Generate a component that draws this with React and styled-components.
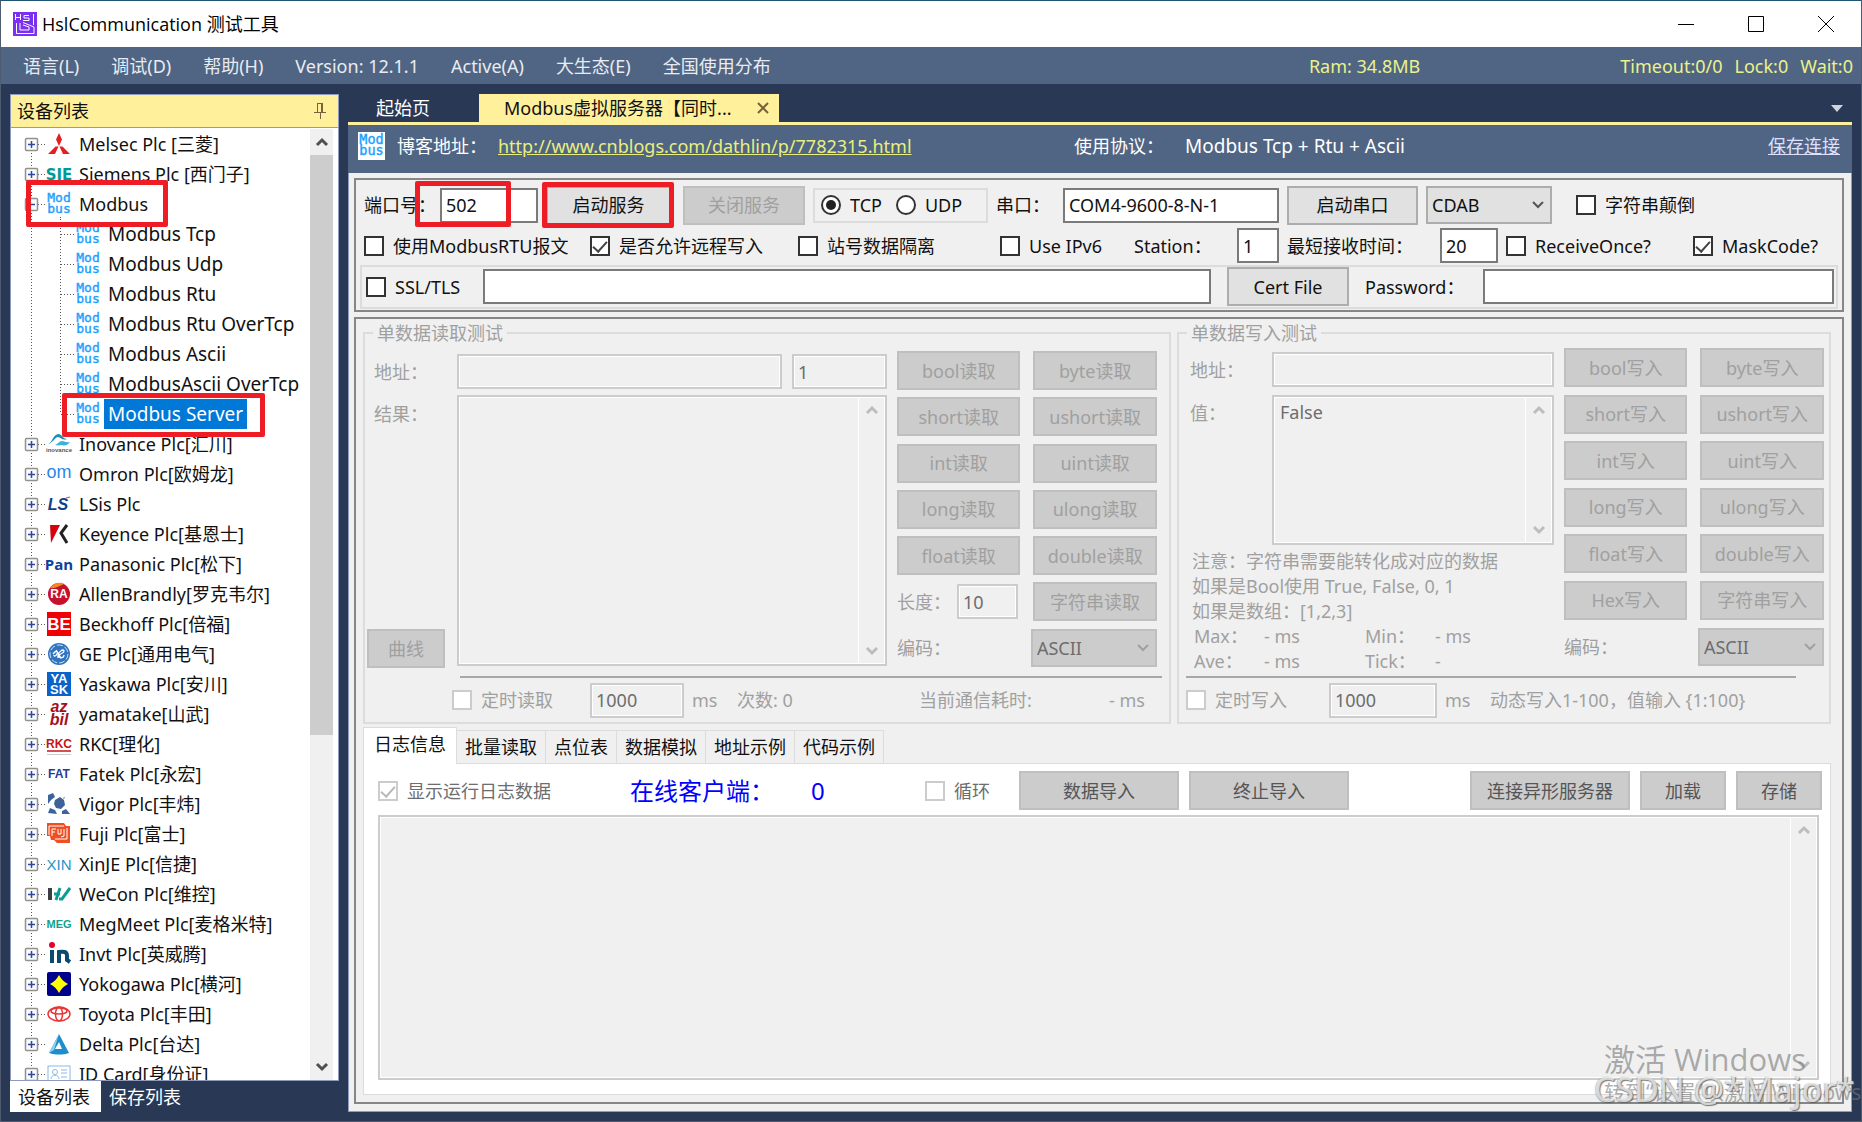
import { useState } from 'react';
import styled, { createGlobalStyle, css } from 'styled-components';

const GlobalStyle = createGlobalStyle`
  * { box-sizing: border-box; }
  body { margin: 0; background: #293955; }
  body, button, input, select, textarea {
    font-family: "Noto Sans", "Noto Sans CJK SC", sans-serif;
    font-size: 18px;
    line-height: 24px;
    color: #111;
  }
  ul { list-style: none; margin: 0; padding: 0; }
`;

/* ---------- window frame ---------- */

const Window = styled.div`
  position: relative;
  display: flex;
  flex-direction: column;
  height: 100vh;
  overflow: hidden;
  border: 1px solid #4f5b6e;
  border-top-color: #1f5673;
  background: #293955;
  white-space: nowrap;
`;

const TitleBar = styled.header`
  display: flex;
  align-items: center;
  flex: none;
  height: 46px;
  padding-left: 12px;
  background: #fff;
`;

const Title = styled.h1`
  flex: 1;
  margin: 0 0 0 5px;
  font-family: "Open Sans", "Noto Sans CJK SC", sans-serif;
  font-size: 18px;
  font-weight: 400;
  color: #000;
`;

const WindowButton = styled.button`
  display: grid;
  place-items: center;
  width: 70px;
  height: 46px;
  border: 0;
  padding: 0;
  background: none;
`;

const MenuBar = styled.nav`
  display: flex;
  align-items: center;
  flex: none;
  height: 37px;
  padding: 0 8px 0 22px;
  background: #506583;
`;

const MenuItem = styled.button`
  border: 0;
  margin-right: 32px;
  padding: 0;
  background: none;
  color: #e8ecf2;
`;

const Stat = styled.span`
  margin-left: 12px;
  color: #eaf28c;
`;

const RamStat = styled(Stat)`
  margin: 0 188px 0 auto;
`;

const Workspace = styled.main`
  display: flex;
  flex: 1;
  gap: 9px;
  min-height: 0;
  padding: 10px 9px 9px;
`;

/* ---------- device list ---------- */

const Sidebar = styled.aside`
  display: flex;
  flex-direction: column;
  flex: none;
  width: 329px;
`;

const SidebarHead = styled.div`
  display: flex;
  align-items: center;
  justify-content: space-between;
  flex: none;
  height: 33px;
  padding: 0 12px 0 6px;
  border: 1px solid #8e9bbc;
  border-bottom: 0;
  background: #fff09b;
`;

const TreePanel = styled.div`
  display: flex;
  flex: 1;
  min-height: 0;
  padding: 1px 5px 0 2px;
  border: 1px solid #8e9bbc;
  background: #fff;
`;

const Tree = styled.ul`
  flex: 1;
  overflow: hidden;
`;

const TreeRow = styled.li`
  position: relative;
  display: flex;
  align-items: center;
  height: 30px;

  svg {
    flex: none;
    overflow: visible;
  }
`;

const TreeLabel = styled.button`
  height: 30px;
  border: 0;
  margin-left: 4px;
  padding: 0 4px;
  background: ${(props) => (props.$selected ? '#0078d7' : 'none')};
  color: ${(props) => (props.$selected ? '#fff' : '#111')};
  font-size: ${(props) => (props.$leaf ? '19px' : '18px')};
  line-height: 28px;
`;

const ScrollTrack = styled.div`
  display: flex;
  flex-direction: column;
  align-items: center;
  flex: none;
  width: 23px;
  background: #f0f0f0;
`;

const ScrollThumb = styled.div`
  width: 100%;
  height: 61%;
  margin-bottom: auto;
  background: #cdcdcd;
`;

const SideTabs = styled.div`
  display: flex;
  flex: none;
  height: 31px;
`;

const SideTab = styled.button`
  width: 91px;
  border: 0;
  padding: 0 3px 0 0;
  background: ${(props) => (props.$active ? '#fff' : 'none')};
  color: ${(props) => (props.$active ? '#111' : '#fff')};
`;

/* ---------- document area ---------- */

const DocArea = styled.section`
  display: flex;
  flex-direction: column;
  flex: 1;
  min-width: 0;
`;

const DocTabs = styled.div`
  display: flex;
  align-items: center;
  flex: none;
  height: 28px;
  padding-right: 9px;
`;

const DocTab = styled.button`
  display: flex;
  align-items: center;
  justify-content: space-between;
  width: ${(props) => (props.$active ? '300px' : '131px')};
  height: 28px;
  border: 0;
  padding: 0 10px 0 ${(props) => (props.$active ? '25px' : '28px')};
  background: ${(props) => (props.$active ? '#fff09b' : 'none')};
  color: ${(props) => (props.$active ? '#111' : '#fff')};
`;

const TabCaret = styled.svg`
  margin-left: auto;
`;

const InfoBar = styled.div`
  display: grid;
  grid-template-columns: 27px 89px 564px 99px 1fr auto;
  column-gap: 12px;
  align-items: center;
  flex: none;
  height: 51px;
  padding: 0 12px 6px 10px;
  border-top: 3px solid #fff09b;
  background: #506583;
  color: #fff;
`;

const BlogLink = styled.a`
  color: #e9ef7e;
`;

const Protocol = styled.span`
  font-size: 19px;
`;

const SaveLink = styled.a`
  color: #dfe0ff;
`;

const Content = styled.div`
  display: flex;
  flex-direction: column;
  flex: 1;
  gap: 5px;
  min-height: 0;
  padding: 5px 7px 7px 5px;
  border: solid #8e9bbc;
  border-width: 0 1px 1px;
  background: #f0f0f0;
`;

const Panel = styled.div`
  border: 2px solid #868686;
`;

/* ---------- controls ---------- */

const disabledText = '#a0a0a0';

const Button = styled.button`
  width: ${(props) => props.$width || '100%'};
  height: 39px;
  border: 2px solid #adadad;
  padding: 0;
  background: #e1e1e1;

  &:disabled {
    border-color: #bfbfbf;
    background: #ccc;
    color: ${(props) => (props.$dark ? '#555' : disabledText)};
  }
`;

const TextInput = styled.input`
  width: 100%;
  min-width: 0;
  height: 35px;
  border: 2px solid #7a7a7a;
  padding: 0 4px;
  background: #fff;
  outline: none;

  &:disabled {
    border-color: #ccc;
    box-shadow: inset 0 0 0 1px #fff;
    background: #f0f0f0;
    color: #6d6d6d;
  }
`;

const SelectBox = styled.span`
  position: relative;
  display: block;
  width: 126px;
  justify-self: end;

  svg {
    position: absolute;
    right: 7px;
    top: 14px;
    pointer-events: none;
  }
`;

const SelectInput = styled.select`
  width: 100%;
  height: 38px;
  border: 2px solid #adadad;
  padding: 0 4px;
  background: #e1e1e1;
  appearance: none;

  &:disabled {
    border-color: #bfbfbf;
    background: #ccc;
    color: #6d6d6d;
    opacity: 1;
  }
`;

const tick = css`
  &:checked::after {
    content: '';
    width: 6px;
    height: 12px;
    margin-bottom: 3px;
    border: solid currentColor;
    border-width: 0 2px 2px 0;
    transform: rotate(42deg);
  }
`;

const dot = css`
  border-radius: 50%;

  &:checked::after {
    content: '';
    width: 10px;
    height: 10px;
    border-radius: 50%;
    background: #222;
  }
`;

const Mark = styled.input`
  display: grid;
  place-items: center;
  flex: none;
  width: 20px;
  height: 20px;
  margin: 0;
  border: 2px solid #333;
  background: #fff;
  color: #444;
  appearance: none;
  ${(props) => (props.type === 'radio' ? dot : tick)}

  &:disabled {
    border-color: #ccc;
    color: #b8b8b8;
  }
`;

const MarkLabel = styled.label`
  display: flex;
  align-items: center;
  gap: 9px;
  color: ${(props) => props.$color || 'inherit'};
`;

const RadioFrame = styled.div`
  display: flex;
  align-items: center;
  gap: 14px;
  height: 35px;
  padding-left: 6px;
  border: 2px solid #dcdcdc;
`;

const Marked = styled.div`
  position: relative;
`;

// red rectangles that point out the steps
const Highlight = styled.span`
  position: absolute;
  inset: ${(props) => props.$inset};
  z-index: 2;
  border: 5px solid #ee1c25;
  border-radius: 2px;
  pointer-events: none;
`;

/* ---------- server settings ---------- */

const Settings = styled(Panel)`
  flex: none;
  padding: 4px 4px 1px;
`;

const PortRow = styled.div`
  display: grid;
  grid-template-columns: 68px 98px 129px 122px 175px 59px 216px 131px 126px 1fr;
  column-gap: 8px;
  align-items: center;
  height: 42px;
  padding-left: 4px;

  > :last-child { padding-left: 16px; }
`;

const OptionRow = styled.div`
  display: grid;
  grid-template-columns: 218px 200px 194px 126px 95px 42px 145px 58px 179px 1fr;
  column-gap: 8px;
  align-items: center;
  height: 39px;
  padding-left: 4px;
`;

const SslRow = styled.div`
  display: grid;
  grid-template-columns: 101px 1fr 122px 102px 351px;
  column-gap: 16px;
  align-items: center;
  height: 44px;
  padding: 0 2px 1px 4px;
  border: 2px solid #dcdcdc;
`;

/* ---------- read / write groups ---------- */

const TestPanel = styled(Panel)`
  display: flex;
  flex-direction: column;
  flex: 1;
  min-height: 0;
  padding: 2px 11px 7px 7px;
`;

const Groups = styled.div`
  display: grid;
  grid-template-columns: 21fr 17fr;
  gap: 6px;
  flex: none;
`;

const Group = styled.fieldset`
  min-width: 0;
  margin: 0;
  border: 2px solid #dcdcdc;
  padding: 0;
  color: ${disabledText};

  legend {
    margin-left: 8px;
    padding: 0 4px;
  }
`;

const ReadBody = styled.div`
  display: grid;
  grid-template-columns: 80px 1fr 260px;
  column-gap: 10px;
  height: 331px;
  padding: 6px 12px 8px 2px;
`;

const WriteBody = styled.div`
  display: grid;
  grid-template-columns: 1fr 260px;
  column-gap: 10px;
  height: 331px;
  padding: 3px 5px 0 11px;
`;

const CaptionColumn = styled.div`
  display: flex;
  flex-direction: column;

  label {
    height: 42px;
    padding-left: 7px;
    line-height: 42px;
  }

  button { margin-top: auto; }
`;

const FieldColumn = styled.div`
  display: flex;
  flex-direction: column;
  gap: 6px;
  padding: 3px 0 2px;
`;

const AddressRow = styled.div`
  display: grid;
  grid-template-columns: 1fr 95px;
  gap: 10px;
`;

const ValueColumn = styled.div`
  padding-top: 4px;
`;

const FieldRow = styled.div`
  display: grid;
  grid-template-columns: 72px 1fr;
  column-gap: 10px;
  height: ${(props) => props.$height};
  margin-bottom: 8px;

  label { line-height: 36px; }
`;

const ActionColumn = styled.div``;

const ActionGrid = styled.div`
  display: grid;
  grid-template-columns: 1fr 1fr;
  column-gap: 13px;
  align-content: space-between;
  height: ${(props) => props.$height};
`;

const ActionRow = styled.div`
  display: grid;
  grid-template-columns: ${(props) => props.$columns};
  align-items: center;
  height: 39px;
  margin-top: 7px;
`;

const MemoBox = styled.div`
  display: flex;
  flex: 1;
  min-height: 0;
  border: 2px solid #ccc;
  background: #f0f0f0;
  box-shadow: inset 0 0 0 1px #fff;
`;

const MemoText = styled.textarea`
  flex: 1;
  min-width: 0;
  border: 0;
  padding: 3px 6px;
  background: none;
  color: #6d6d6d;
  resize: none;
`;

const MemoScroll = styled.div`
  display: flex;
  flex-direction: column;
  justify-content: space-between;
  align-items: center;
  width: 27px;
  padding: 8px 0;
  border-left: 1px solid #fff;
`;

const Notes = styled.div`
  margin-top: -4px;
  padding-left: 2px;
  line-height: 25px;
`;

const Timings = styled.div`
  display: grid;
  grid-template-columns: 70px 101px 70px 1fr;
  padding-left: 4px;
  line-height: 25px;
`;

const Divider = styled.hr`
  margin: 0 ${(props) => props.$right} 0 ${(props) => props.$left};
  border: 0;
  border-top: 2px solid #a8a8a8;
`;

const TimerRow = styled.div`
  display: grid;
  grid-template-columns: ${(props) => props.$columns};
  column-gap: 8px;
  align-items: center;
  height: 44px;
  padding-left: ${(props) => props.$left};
`;

/* ---------- log ---------- */

const LogTabs = styled.div`
  display: flex;
  align-items: flex-end;
  flex: none;
  height: 36px;
  margin-top: 3px;
`;

const LogTab = styled.button`
  position: relative;
  height: ${(props) => (props.$active ? '37px' : '33px')};
  margin-bottom: ${(props) => (props.$active ? '-1px' : '0')};
  border: 1px solid #dcdcdc;
  border-bottom: 0;
  border-left-width: ${(props) => (props.$active ? '1px' : '0')};
  padding: ${(props) => (props.$active ? '0 10px 4px' : '0 8px')};
  background: ${(props) => (props.$active ? '#fff' : '#f0f0f0')};
`;

const LogPage = styled.div`
  display: flex;
  flex-direction: column;
  flex: 1;
  min-height: 0;
  padding: 7px 8px 14px 14px;
  border: 1px solid #dcdcdc;
  background: #fff;
`;

const LogBar = styled.div`
  display: grid;
  grid-template-columns: 242px 171px 104px 84px 160px 160px 1fr 160px 86px 86px;
  column-gap: 10px;
  align-items: center;
  flex: none;
  margin-bottom: 5px;
`;

const Online = styled.span`
  font-size: 24px;
  line-height: 32px;
  color: #00f;
`;

const LogMemo = styled(MemoBox)`
  margin-right: 3px;
`;

/* ---------- overlays ---------- */

const Activation = styled.div`
  position: absolute;
  left: calc(100% - 257px);
  bottom: 14px;
  z-index: 3;
  font-size: 21px;
  line-height: 30px;
  color: rgba(120, 120, 120, 0.6);
  pointer-events: none;

  strong {
    display: block;
    font-family: "Open Sans", "Noto Sans CJK SC", sans-serif;
    font-size: 31px;
    font-weight: 400;
    line-height: 36px;
  }
`;

const Credit = styled.div`
  position: absolute;
  right: 6px;
  bottom: 12px;
  z-index: 4;
  font-size: 34px;
  line-height: 40px;
  color: rgba(245, 245, 245, 0.75);
  text-shadow: 1px 1px 1px rgba(90, 90, 90, 0.8), -1px 0 1px rgba(140, 140, 140, 0.5);
  pointer-events: none;
`;

/* ---------- drawings ---------- */

const Word = ({ children, x = 12, y = 17, size = 12, fill, weight = 700, family = 'Liberation Sans', italic }) => (
  <text
    x={x}
    y={y}
    fill={fill}
    fontSize={size}
    fontWeight={weight}
    fontFamily={family}
    fontStyle={italic ? 'italic' : 'normal'}
    textAnchor="middle"
  >
    {children}
  </text>
);

const modbus = (
  <g stroke="#1e9fff" strokeWidth="0.4">
    <Word y={10} size={13} fill="#1e9fff" family="DejaVu Sans Mono" weight={400}>Mod</Word>
    <Word y={21} size={13} fill="#1e9fff" family="DejaVu Sans Mono" weight={400}>bus</Word>
  </g>
);

const logos = {
  modbus,
  melsec: (
    <path fill="#e61e1e" d="M12 1l3 6.500L12 14 9 7.500zM8.500 14.500h3L8 22H1zM15.500 14.500h-3L16 22h7z" />
  ),
  siemens: <Word y={18} size={15} fill="#099" family="DejaVu Sans">SIE</Word>,
  inovance: (
    <>
      <path fill="#1791b5" d="M1 12c4-1 5-9 10-10 4 0 5 5 9 5-4 2-7-2-9-2-3 0-5 6-10 7z" />
      <path fill="#3cb4d8" d="M8 13c3-1 4-4 7-4s4 2 8 1c-3 4-6 4-8 3-2 0-3 1-7 0z" />
      <Word y={20} size={6} fill="#555">inovance</Word>
    </>
  ),
  omron: <Word y={16} size={18} fill="#2a86ee" weight={400}>om</Word>,
  lsis: (
    <>
      <Word x={11} y={18} size={16} fill="#123f8c" italic>LS</Word>
      <path stroke="#e33" d="M19 6l4-1" />
    </>
  ),
  keyence: (
    <>
      <path fill="#d7000f" d="M3 3h10L4 21z" />
      <path fill="none" stroke="#222" strokeWidth="3" d="M20 3l-6 8 6 10" />
    </>
  ),
  panasonic: <Word y={18} size={15} fill="#0b409c" family="Open Sans">Pan</Word>,
  allen: (
    <>
      <circle cx="12" cy="12" r="11" fill="#c8102e" />
      <path fill="#f08a24" d="M3 6C7 0 15 0 17 2 12 4 8 7 3 6z" />
      <Word y={16} size={12} fill="#fff">RA</Word>
    </>
  ),
  beckhoff: (
    <>
      <path fill="#f00000" d="M0 0h24v24H0z" />
      <Word y={18} size={17} fill="#fff">BE</Word>
    </>
  ),
  ge: (
    <>
      <circle cx="12" cy="12" r="11" fill="#2f74c0" />
      <circle cx="12" cy="12" r="9" fill="none" stroke="#cfe3f7" strokeDasharray="6 2" />
      <path fill="none" stroke="#fff" strokeWidth="1.300" d="M6 12c4-5 5-2 4 0s-3 3-3 1M11 16c-1-6 6-10 6-7s-5 2-5 5 5 2 5-1M9 8l5 8" />
    </>
  ),
  yaskawa: (
    <>
      <path fill="#0a63c8" d="M0 0h24v24H0z" />
      <Word y={11} size={13} fill="#fff">YA</Word>
      <Word y={22} size={13} fill="#fff">SK</Word>
    </>
  ),
  yamatake: (
    <>
      <Word x={12} y={10} size={16} fill="#a50e1f" italic>az</Word>
      <Word y={23} size={16} fill="#a50e1f" italic>bil</Word>
    </>
  ),
  rkc: (
    <>
      <Word y={16} size={12} fill="#c81418">RKC</Word>
      <path stroke="#c81418" strokeWidth="1.500" d="M0 19h24" />
      <path stroke="#ccc" d="M0 22.500h24" />
    </>
  ),
  fatek: <Word y={16} size={12} fill="#2a3a96">FAT</Word>,
  vigor: (
    <path fill="#3d6499" d="M1 3l5-2 2 4-4 3-3 4zM8 8l5-3 4 3 1 5-4 4-5-1-2-4zM1 21l2-5 5 2 2 4zM15 19l4-2 4 5h-8zM16 6l2-1-1 2z" />
  ),
  fuji: (
    <>
      <path fill="#f04e23" d="M0 1h17l2 3h4v17H10l-3-3H4l-1-4H0z" />
      <path fill="none" stroke="#fff" d="M2 13V4h15M5 14V7h4M5 10h3M11 7v5h3V7M17 7v7l-3 1M20 6v11H8" />
    </>
  ),
  xinje: <Word y={18} size={15} fill="#2596c8" weight={400}>XIN</Word>,
  wecon: (
    <>
      <path stroke="#3a3f42" strokeWidth="4" d="M3 6v12" />
      <path stroke="#0d9d94" strokeWidth="3" d="M9 18l4-12M12 17h3l8-11M7 12h6" fill="none" />
    </>
  ),
  megmeet: <Word y={16} size={11} fill="#14a08c">MEG</Word>,
  invt: (
    <>
      <circle cx="5" cy="3" r="3" fill="#e4002b" />
      <path fill="none" stroke="#0a4a6e" strokeWidth="4" d="M5 8v13M12 21V10c6-1 8 0 8 4v4l3 2" />
    </>
  ),
  yokogawa: (
    <>
      <rect width="24" height="24" rx="2" fill="#00008c" />
      <path fill="#ff0" d="M12 3c2 4 5 7 9 9-4 2-7 5-9 9-2-4-5-7-9-9 4-2 7-5 9-9z" />
    </>
  ),
  toyota: (
    <g fill="none" stroke="#eb3434" strokeWidth="1.500">
      <ellipse cx="12" cy="12" rx="11" ry="7" />
      <ellipse cx="12" cy="12" rx="3.500" ry="7" />
      <ellipse cx="12" cy="9" rx="8" ry="3" />
    </g>
  ),
  delta: (
    <>
      <path fill="#1f8ccc" d="M12 2l10 19c-6 2-13 2-20 0z" />
      <path fill="#8fd0f0" d="M12 2L2 21l5-3z" />
      <path fill="#fff" d="M12 10l3 7H8z" />
    </>
  ),
  idcard: (
    <g fill="none" stroke="#8bb8e8">
      <rect x="1" y="4" width="22" height="17" />
      <circle cx="8" cy="10" r="2.500" />
      <path d="M4 17c0-5 8-5 8 0M14 8h6M14 11h6M14 15h6" />
    </g>
  ),
};

const Logo = ({ name, size = 24 }) => (
  <svg width={size} height={size} viewBox="0 0 24 24" aria-hidden="true">{logos[name]}</svg>
);

// dotted guide lines and the plus / minus box in front of a node
const Guide = ({ child, open, first, last }) => (
  <svg width={child ? 63 : 34} height="30" fill="none" stroke="#555" aria-hidden="true">
    <path strokeDasharray="1 2" d={first ? 'M18.500 15v15' : 'M18.500 0v30'} />
    {child && <path strokeDasharray="1 2" d={last ? 'M47.500 0v15' : 'M47.500 0v30'} />}
    <path strokeDasharray="1 2" d={child ? 'M48 15.500h15' : 'M25 15.500h9'} />
    {open && <path strokeDasharray="1 2" d="M47.500 28v2" />}
    {!child && (
      <>
        <rect x="12.500" y="9.500" width="12" height="12" rx="1" fill="#fafafa" stroke="#919191" strokeWidth="1.500" />
        <path stroke="#2b4a9b" strokeWidth="1.500" d={open ? 'M15 15.500h7' : 'M15 15.500h7M18.500 12v7'} />
      </>
    )}
  </svg>
);

const Chevron = ({ up, color = '#bdbdbd', width = 3 }) => (
  <svg width="14" height="10" viewBox="0 0 14 10" fill="none" stroke={color} strokeWidth={width} aria-hidden="true">
    <path d={up ? 'M2 8l5-5 5 5' : 'M2 2l5 5 5-5'} />
  </svg>
);

const ScrollArrow = styled.div`
  display: grid;
  place-items: center;
  height: 26px;
`;

const AppLogo = () => (
  <svg width="24" height="24" viewBox="0 0 24 24" aria-hidden="true">
    <path fill="#7b2ff2" d="M0 0h24v24H0z" />
    <path fill="none" stroke="#fff" d="M2.500 2v6M7.500 2v6M2.500 5.500h5M16 3.500h-5v2.500h5V8.500h-6M20.500 2v11M3.500 11v10.500H21V15L10 10.500M7 11v7h9v-3l-6-2" />
  </svg>
);

const Pin = () => (
  <svg width="12" height="18" viewBox="0 0 12 18" fill="none" stroke="#75633d" aria-hidden="true">
    <path d="M3.500 1v9M3 1.500h6M0 10.500h12M6.500 11v6" />
    <path strokeWidth="2" d="M8 1v9" />
  </svg>
);

/* ---------- data ---------- */

const devices = [
  { logo: 'melsec', name: 'Melsec Plc [三菱]' },
  { logo: 'siemens', name: 'Siemens Plc [西门子]' },
  { logo: 'modbus', name: 'Modbus', open: true, mark: '-9px 142px -8px 13px' },
  { logo: 'modbus', name: 'Modbus Tcp', child: true },
  { logo: 'modbus', name: 'Modbus Udp', child: true },
  { logo: 'modbus', name: 'Modbus Rtu', child: true },
  { logo: 'modbus', name: 'Modbus Rtu OverTcp', child: true },
  { logo: 'modbus', name: 'Modbus Ascii', child: true },
  { logo: 'modbus', name: 'ModbusAscii OverTcp', child: true },
  { logo: 'modbus', name: 'Modbus Server', child: true, last: true, selected: true, mark: '-6px 45px -8px 49px' },
  { logo: 'inovance', name: 'Inovance Plc[汇川]' },
  { logo: 'omron', name: 'Omron Plc[欧姆龙]' },
  { logo: 'lsis', name: 'LSis Plc' },
  { logo: 'keyence', name: 'Keyence Plc[基恩士]' },
  { logo: 'panasonic', name: 'Panasonic Plc[松下]' },
  { logo: 'allen', name: 'AllenBrandly[罗克韦尔]' },
  { logo: 'beckhoff', name: 'Beckhoff Plc[倍福]' },
  { logo: 'ge', name: 'GE Plc[通用电气]' },
  { logo: 'yaskawa', name: 'Yaskawa Plc[安川]' },
  { logo: 'yamatake', name: 'yamatake[山武]' },
  { logo: 'rkc', name: 'RKC[理化]' },
  { logo: 'fatek', name: 'Fatek Plc[永宏]' },
  { logo: 'vigor', name: 'Vigor Plc[丰炜]' },
  { logo: 'fuji', name: 'Fuji Plc[富士]' },
  { logo: 'xinje', name: 'XinJE Plc[信捷]' },
  { logo: 'wecon', name: 'WeCon Plc[维控]' },
  { logo: 'megmeet', name: 'MegMeet Plc[麦格米特]' },
  { logo: 'invt', name: 'Invt Plc[英威腾]' },
  { logo: 'yokogawa', name: 'Yokogawa Plc[横河]' },
  { logo: 'toyota', name: 'Toyota Plc[丰田]' },
  { logo: 'delta', name: 'Delta Plc[台达]' },
  { logo: 'idcard', name: 'ID Card[身份证]' },
];

const menus = ['语言(L)', '调试(D)', '帮助(H)', 'Version: 12.1.1', 'Active(A)', '大生态(E)', '全国使用分布'];
const readTypes = ['bool', 'byte', 'short', 'ushort', 'int', 'uint', 'long', 'ulong', 'float', 'double'];
const writeTypes = [...readTypes, 'Hex', '字符串'];
const logTabs = ['日志信息', '批量读取', '点位表', '数据模拟', '地址示例', '代码示例'];

/* ---------- small pieces ---------- */

const Check = ({ label, color, ...rest }) => (
  <MarkLabel $color={color}>
    <Mark type="checkbox" {...rest} />
    {label}
  </MarkLabel>
);

const Select = ({ value, disabled, ...rest }) => (
  <SelectBox>
    <SelectInput defaultValue={value} disabled={disabled} {...rest}>
      <option>{value}</option>
    </SelectInput>
    <Chevron color={disabled ? '#a0a0a0' : '#555'} width={2} />
  </SelectBox>
);

const Memo = ({ as: Box = MemoBox, ...rest }) => (
  <Box>
    <MemoText disabled {...rest} />
    <MemoScroll>
      <Chevron up />
      <Chevron />
    </MemoScroll>
  </Box>
);

const DeviceList = () => (
  <Sidebar>
    <SidebarHead>
      设备列表
      <Pin />
    </SidebarHead>
    <TreePanel>
      <Tree>
        {devices.map((device, index) => (
          <TreeRow key={device.name}>
            <Guide child={device.child} open={device.open} first={index === 0} last={device.last} />
            <Logo name={device.logo} />
            <TreeLabel $leaf={device.child} $selected={device.selected}>{device.name}</TreeLabel>
            {device.mark && <Highlight $inset={device.mark} />}
          </TreeRow>
        ))}
      </Tree>
      <ScrollTrack>
        <ScrollArrow><Chevron up color="#505050" /></ScrollArrow>
        <ScrollThumb />
        <ScrollArrow><Chevron color="#505050" /></ScrollArrow>
      </ScrollTrack>
    </TreePanel>
    <SideTabs>
      <SideTab $active>设备列表</SideTab>
      <SideTab>保存列表</SideTab>
    </SideTabs>
  </Sidebar>
);

const ServerSettings = () => {
  const [protocol, setProtocol] = useState('TCP');

  return (
    <Settings>
      <PortRow>
        <label htmlFor="port">端口号：</label>
        <Marked>
          <TextInput id="port" defaultValue="502" />
          <Highlight $inset="-7px 27px -4px -25px" />
        </Marked>
        <Marked>
          <Button $width="125px">启动服务</Button>
          <Highlight $inset="-4px 1px -3px -4px" />
        </Marked>
        <Button disabled>关闭服务</Button>
        <RadioFrame>
          {['TCP', 'UDP'].map((name) => (
            <MarkLabel key={name}>
              <Mark
                type="radio"
                name="protocol"
                checked={protocol === name}
                onChange={() => setProtocol(name)}
              />
              {name}
            </MarkLabel>
          ))}
        </RadioFrame>
        <label htmlFor="serial">串口：</label>
        <TextInput id="serial" defaultValue="COM4-9600-8-N-1" />
        <Button>启动串口</Button>
        <Select value="CDAB" aria-label="CDAB" />
        <Check label="字符串颠倒" />
      </PortRow>
      <OptionRow>
        <Check label="使用ModbusRTU报文" />
        <Check label="是否允许远程写入" defaultChecked />
        <Check label="站号数据隔离" />
        <Check label="Use IPv6" />
        <label htmlFor="station">Station：</label>
        <TextInput id="station" defaultValue="1" />
        <label htmlFor="interval">最短接收时间：</label>
        <TextInput id="interval" defaultValue="20" />
        <Check label="ReceiveOnce?" />
        <Check label="MaskCode?" defaultChecked />
      </OptionRow>
      <SslRow>
        <Check label="SSL/TLS" />
        <TextInput aria-label="SSL/TLS" />
        <Button>Cert File</Button>
        <label htmlFor="password">Password：</label>
        <TextInput id="password" type="password" />
      </SslRow>
    </Settings>
  );
};

const ReadGroup = () => (
  <Group>
    <legend>单数据读取测试</legend>
    <ReadBody>
      <CaptionColumn>
        <label htmlFor="read-address">地址：</label>
        <label htmlFor="read-result">结果：</label>
        <Button $width="78px" disabled>曲线</Button>
      </CaptionColumn>
      <FieldColumn>
        <AddressRow>
          <TextInput id="read-address" disabled />
          <TextInput defaultValue="1" aria-label="地址" disabled />
        </AddressRow>
        <Memo id="read-result" />
      </FieldColumn>
      <ActionColumn>
        <ActionGrid $height="224px">
          {readTypes.map((type) => <Button key={type} disabled>{type}读取</Button>)}
        </ActionGrid>
        <ActionRow $columns="60px 61px 1fr 124px">
          <label htmlFor="read-length">长度：</label>
          <TextInput id="read-length" defaultValue="10" disabled />
          <span />
          <Button disabled>字符串读取</Button>
        </ActionRow>
        <ActionRow $columns="1fr 126px">
          <label htmlFor="read-encoding">编码：</label>
          <Select id="read-encoding" value="ASCII" disabled />
        </ActionRow>
      </ActionColumn>
    </ReadBody>
    <Divider $left="95px" $right="7px" />
    <TimerRow $left="87px" $columns="130px 94px 37px 174px 182px 1fr">
      <Check label="定时读取" disabled />
      <TextInput defaultValue="1000" aria-label="定时读取" disabled />
      <span>ms</span>
      <span>次数: 0</span>
      <span>当前通信耗时:</span>
      <span>- ms</span>
    </TimerRow>
  </Group>
);

const WriteGroup = () => (
  <Group>
    <legend>单数据写入测试</legend>
    <WriteBody>
      <ValueColumn>
        <FieldRow $height="35px">
          <label htmlFor="write-address">地址：</label>
          <TextInput id="write-address" disabled />
        </FieldRow>
        <FieldRow $height="150px">
          <label htmlFor="write-value">值：</label>
          <Memo id="write-value" defaultValue="False" />
        </FieldRow>
        <Notes>
          注意：字符串需要能转化成对应的数据
          <br />
          如果是Bool使用 True, False, 0, 1
          <br />
          如果是数组：[1,2,3]
        </Notes>
        <Timings>
          <span>Max：</span>
          <span>- ms</span>
          <span>Min：</span>
          <span>- ms</span>
          <span>Ave：</span>
          <span>- ms</span>
          <span>Tick：</span>
          <span>-</span>
        </Timings>
      </ValueColumn>
      <ActionColumn>
        <ActionGrid $height="272px">
          {writeTypes.map((type) => <Button key={type} disabled>{type}写入</Button>)}
        </ActionGrid>
        <ActionRow $columns="1fr 126px">
          <label htmlFor="write-encoding">编码：</label>
          <Select id="write-encoding" value="ASCII" disabled />
        </ActionRow>
      </ActionColumn>
    </WriteBody>
    <Divider $left="7px" $right="33px" />
    <TimerRow $left="7px" $columns="135px 108px 37px 1fr">
      <Check label="定时写入" disabled />
      <TextInput defaultValue="1000" aria-label="定时写入" disabled />
      <span>ms</span>
      <span>动态写入1-100，值输入 {'{1:100}'}</span>
    </TimerRow>
  </Group>
);

const Log = () => (
  <>
    <LogTabs>
      {logTabs.map((tab, index) => <LogTab key={tab} $active={index === 0}>{tab}</LogTab>)}
    </LogTabs>
    <LogPage>
      <LogBar>
        <Check label="显示运行日志数据" color="#6d6d6d" defaultChecked disabled />
        <Online>在线客户端：</Online>
        <Online>0</Online>
        <Check label="循环" color="#6d6d6d" disabled />
        <Button $dark disabled>数据导入</Button>
        <Button $dark disabled>终止导入</Button>
        <span />
        <Button $dark disabled>连接异形服务器</Button>
        <Button $dark disabled>加载</Button>
        <Button $dark disabled>存储</Button>
      </LogBar>
      <Memo as={LogMemo} aria-label="日志信息" />
    </LogPage>
  </>
);

const App = () => {
  return (
    <>
      <GlobalStyle />
      <Window>
        <TitleBar>
          <AppLogo />
          <Title>HslCommunication 测试工具</Title>
          <WindowButton aria-label="最小化">
            <svg width="16" height="16" stroke="#000"><path d="M0 8.500h16" /></svg>
          </WindowButton>
          <WindowButton aria-label="最大化">
            <svg width="16" height="16" stroke="#000" fill="none"><path d="M.5.5h15v15H.5z" /></svg>
          </WindowButton>
          <WindowButton aria-label="关闭">
            <svg width="16" height="16" stroke="#000"><path d="M0 0l16 16M16 0L0 16" /></svg>
          </WindowButton>
        </TitleBar>
        <MenuBar>
          {menus.map((menu) => <MenuItem key={menu}>{menu}</MenuItem>)}
          <RamStat>Ram: 34.8MB</RamStat>
          <Stat>Timeout:0/0</Stat>
          <Stat>Lock:0</Stat>
          <Stat>Wait:0</Stat>
        </MenuBar>
        <Workspace>
          <DeviceList />
          <DocArea>
            <DocTabs>
              <DocTab>起始页</DocTab>
              <DocTab $active>
                Modbus虚拟服务器【同时...
                <svg width="12" height="12" stroke="#75633d" strokeWidth="2" aria-hidden="true">
                  <path d="M1 1l10 10M11 1L1 11" />
                </svg>
              </DocTab>
              <TabCaret width="12" height="7" aria-hidden="true">
                <path fill="#ced4dd" d="M0 0h12L6 7z" />
              </TabCaret>
            </DocTabs>
            <InfoBar>
              <svg width="27" height="28" viewBox="-1 -1 26 26" aria-hidden="true">
                <path fill="#fff" d="M-1-2h26v28H-1z" />
                {modbus}
              </svg>
              <span>博客地址：</span>
              <BlogLink href="http://www.cnblogs.com/dathlin/p/7782315.html">
                http://www.cnblogs.com/dathlin/p/7782315.html
              </BlogLink>
              <span>使用协议：</span>
              <Protocol>Modbus Tcp + Rtu + Ascii</Protocol>
              <SaveLink href="#save">保存连接</SaveLink>
            </InfoBar>
            <Content>
              <ServerSettings />
              <TestPanel>
                <Groups>
                  <ReadGroup />
                  <WriteGroup />
                </Groups>
                <Log />
              </TestPanel>
            </Content>
          </DocArea>
        </Workspace>
        <Activation>
          <strong>激活 Windows</strong>
          转到“设置”以激活 Windows。
        </Activation>
        <Credit>CSDN @*Major*</Credit>
      </Window>
    </>
  );
};

export default App;
